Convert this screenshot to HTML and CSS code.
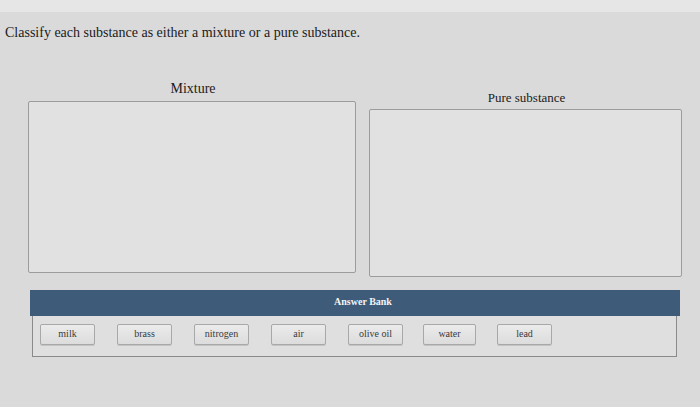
FILE: index.html
```html
<!DOCTYPE html>
<html>
<head>
<meta charset="utf-8">
<link rel="stylesheet" href="styles.css">
</head>
<body>
<div class="topstrip"></div>
<div class="page">
  <p class="question">Classify each substance as either a mixture or a pure substance.</p>
  <div class="bins">
    <div class="bin bin-left">
      <div class="bin-label">Mixture</div>
      <div class="bin-box"></div>
    </div>
    <div class="bin bin-right">
      <div class="bin-label">Pure substance</div>
      <div class="bin-box"></div>
    </div>
  </div>
  <div class="bank">
    <div class="bank-head">Answer Bank</div>
    <div class="bank-body">
      <div class="chip">milk</div>
      <div class="chip">brass</div>
      <div class="chip">nitrogen</div>
      <div class="chip">air</div>
      <div class="chip">olive oil</div>
      <div class="chip chip-narrow">water</div>
      <div class="chip chip-last">lead</div>
    </div>
  </div>
</div>
</body>
</html>
```
FILE: styles.css
```css
html, body {
  margin: 0;
  padding: 0;
}
body {
  width: 700px;
  height: 407px;
  overflow: hidden;
  background: #dadada;
  font-family: "Liberation Serif", "Times New Roman", serif;
  color: #222;
}
.topstrip {
  height: 12px;
  background: #e6e6e6;
}
.page {
  padding: 0 0 0 5px;
}
.question {
  margin: 13px 0 0 0;
  font-size: 14px;
  line-height: 16px;
  color: #1a1a1a;
}
.bins {
  display: flex;
  margin-top: 40px;
  padding-left: 23px;
  gap: 13px;
}
.bin {
  display: flex;
  flex-direction: column;
}
.bin-left {
  width: 328px;
}
.bin-right {
  width: 313px;
  padding-top: 9px;
}
.bin-label {
  text-align: center;
  font-size: 14px;
  line-height: 15px;
  height: 15px;
  color: #1a1a1a;
}
.bin-left .bin-label {
  padding-left: 2px;
}
.bin-right .bin-label {
  font-size: 13px;
  padding-left: 2px;
}
.bin-box {
  margin-top: 5px;
  height: 170px;
  border: 1.5px solid #9c9c9c;
  border-radius: 2px;
  background: #e1e1e1;
}
.bin-right .bin-box {
  margin-top: 4px;
  height: 166px;
}
.bank {
  margin: 13px 0 0 25px;
  width: 650px;
}
.bank-head {
  height: 26px;
  background: #3e5b79;
  color: #f4f4f4;
  font-size: 10px;
  font-weight: bold;
  line-height: 24px;
  text-align: center;
  padding-left: 16px;
}
.bank-body {
  margin: 0 3px 0 2px;
  height: 41px;
  border: 1px solid #8a8a8a;
  border-top: none;
  background: #dfdfdf;
  display: flex;
  align-items: flex-start;
  gap: 22px;
  padding-left: 7px;
  padding-top: 8px;
  box-sizing: border-box;
}
.chip {
  width: 53px;
  height: 19px;
  border: 1px solid #a8a8a8;
  border-radius: 2px;
  background: linear-gradient(#ebebeb, #dcdcdc);
  box-shadow: 0 1px 0 #c4c4c4;
  font-size: 10px;
  line-height: 17px;
  text-align: center;
  color: #3a3a3a;
}
.chip-narrow {
  margin-left: -2px;
  width: 51px;
}
.chip-last {
  margin-left: -1px;
}
```
